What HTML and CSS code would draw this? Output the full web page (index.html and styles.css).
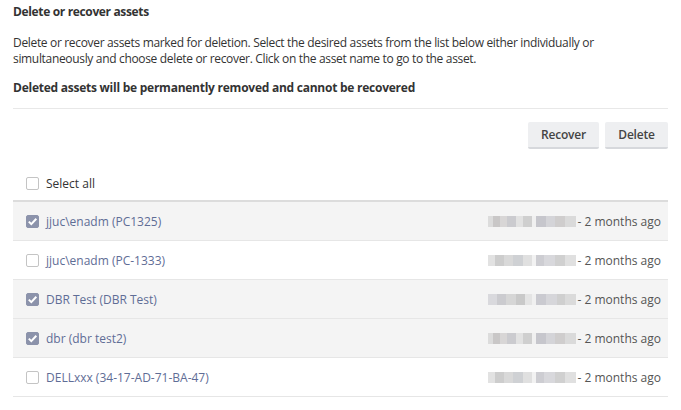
FILE: index.html
```html
<!DOCTYPE html>
<html>
<head>
<meta charset="utf-8">
<link rel="stylesheet" href="styles.css">
</head>
<body>
<div class="page">
  <h1 class="title">Delete or recover assets</h1>
  <p class="desc">Delete or recover assets marked for deletion. Select the desired assets from the list below either individually or simultaneously and choose delete or recover. Click on the asset name to go to the asset.</p>
  <p class="warn">Deleted assets will be permanently removed and cannot be recovered</p>
  <div class="toolbar">
    <button class="btn">Recover</button>
    <button class="btn">Delete</button>
  </div>
  <label class="select-all"><span class="cb"></span>Select all</label>
  <ul class="list">
    <li class="row selected">
      <span class="cb checked"><svg viewBox="0 0 13 13"><path d="M2.8 6.6 L5.3 9.1 L10.3 3.7" /></svg></span>
      <a class="name">jjuc\enadm (PC1325)</a>
      <span class="meta"><span class="blur b1"></span> - 2 months ago</span>
    </li>
    <li class="row">
      <span class="cb"></span>
      <a class="name">jjuc\enadm (PC-1333)</a>
      <span class="meta"><span class="blur b2"></span> - 2 months ago</span>
    </li>
    <li class="row selected">
      <span class="cb checked"><svg viewBox="0 0 13 13"><path d="M2.8 6.6 L5.3 9.1 L10.3 3.7" /></svg></span>
      <a class="name">DBR Test (DBR Test)</a>
      <span class="meta"><span class="blur b3"></span> - 2 months ago</span>
    </li>
    <li class="row selected">
      <span class="cb checked"><svg viewBox="0 0 13 13"><path d="M2.8 6.6 L5.3 9.1 L10.3 3.7" /></svg></span>
      <a class="name">dbr (dbr test2)</a>
      <span class="meta"><span class="blur b1"></span> - 2 months ago</span>
    </li>
    <li class="row">
      <span class="cb"></span>
      <a class="name">DELLxxx (34-17-AD-71-BA-47)</a>
      <span class="meta"><span class="blur b2"></span> - 2 months ago</span>
    </li>
  </ul>
</div>
</body>
</html>
```

FILE: styles.css
```css
* { box-sizing: border-box; }
html, body { margin: 0; padding: 0; background: #fff; }
body {
  font-family: "Open Sans", "Noto Sans", sans-serif;
  font-size: 12px;
  color: #333;
}
.page {
  padding: 2px 13px 0 13px;
}
.title {
  font-size: 12px;
  font-weight: 700;
  margin: 0;
  line-height: 20px;
  letter-spacing: -0.35px;
}
.desc {
  margin: 13px 0 0 0;
  line-height: 16px;
  letter-spacing: -0.33px;
}
.warn {
  margin: 12px 0 0 0;
  font-weight: 700;
  line-height: 17px;
  letter-spacing: -0.25px;
  padding-bottom: 12px;
  border-bottom: 1px solid #e8e8e8;
}
.toolbar {
  display: flex;
  justify-content: flex-end;
  gap: 6px;
  margin-top: 13px;
}
.btn {
  font-family: inherit;
  font-size: 12px;
  font-weight: 600;
  letter-spacing: -0.2px;
  color: #444;
  background: #eeeff1;
  border: 0;
  border-bottom: 2px solid #d6d8dc;
  border-radius: 2px;
  height: 27px;
  padding: 0 10px;
}
.btn:first-child { width: 71px; }
.btn:last-child { width: 63px; }
.select-all {
  display: flex;
  align-items: center;
  gap: 7px;
  margin-top: 26px;
  padding-left: 13px;
  height: 16px;
}
.list {
  list-style: none;
  margin: 9px 0 0 0;
  padding: 0;
  border-top: 2px solid #dcdcdc;
}
.row {
  display: flex;
  align-items: center;
  height: 39px;
  padding: 0 7px 0 13px;
  border-bottom: 1px solid #e6e6e6;
}
.row.selected { background: #f4f4f4; }
.cb {
  flex: none;
  width: 13px;
  height: 13px;
  border: 1px solid #c4c4c4;
  border-radius: 2px;
  background: #fff;
  display: inline-flex;
}
.cb.checked {
  background: #8c93ab;
  border-color: #8c93ab;
}
.cb svg { width: 13px; height: 13px; margin: -1px; }
.cb svg path { fill: none; stroke: #fff; stroke-width: 2; }
.row .cb { margin-right: 7px; }
.name {
  color: #5f6d96;
  text-decoration: none;
  flex: 1;
}
.meta {
  color: #555;
  display: flex;
  align-items: center;
  white-space: pre;
}
.blur {
  display: inline-block;
  width: 88px;
  height: 11px;
  margin-right: -2px;
  filter: blur(0.5px);
}
.b1 { background: linear-gradient(90deg, #dcdcdc 0 6%, #c9c7c7 6% 14%, #d8d6d6 14% 22%, #cbcbcf 22% 32%, #e2e2e2 32% 40%, #cfcfcf 40% 50%, #f0f0f0 50% 55%, #c6c6cc 55% 66%, #d4d4d8 66% 76%, #cfcdcd 76% 88%, #dadada 88% 100%); }
.b2 { background: linear-gradient(90deg, #e2e2e2 0 8%, #cdcdcd 8% 18%, #d9d9d9 18% 28%, #cfd1d4 28% 40%, #e0e0e0 40% 50%, #f2f2f2 50% 55%, #cdcdd2 55% 64%, #d8d8dc 64% 76%, #d0d0d0 76% 88%, #e0e0e0 88% 100%); }
.b3 { background: linear-gradient(90deg, #d9d9dd 0 10%, #cbcbcf 10% 20%, #d6d6d6 20% 32%, #c9c9c9 32% 42%, #e4e4e4 42% 50%, #f0f0f0 50% 55%, #cacad0 55% 66%, #d6d6da 66% 78%, #cfcfcf 78% 88%, #dadada 88% 100%); }
```
